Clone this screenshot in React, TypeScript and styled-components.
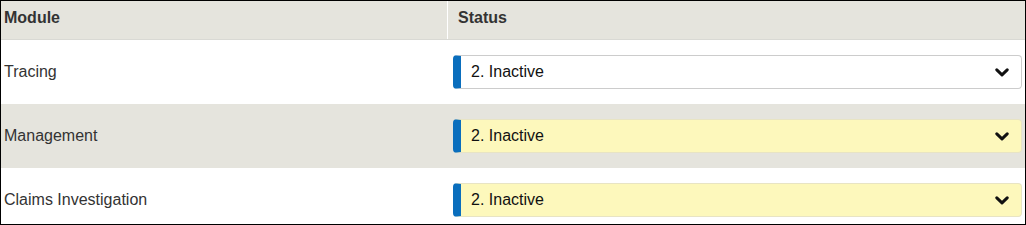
import React, { useState } from 'react';
import styled, { createGlobalStyle } from 'styled-components';

const GlobalStyle = createGlobalStyle`
  html, body {
    margin: 0;
    padding: 0;
    background: #ffffff;
  }
  body {
    font-family: "Liberation Sans", Arial, sans-serif;
  }
`;

const headerBg = '#e5e4dd';
const blue = '#0a6ebd';

const Frame = styled.div`
  width: 1026px;
  height: 225px;
  box-sizing: border-box;
  border: 1px solid #000000;
  overflow: hidden;
  background: #ffffff;
`;

const HeaderRow = styled.div`
  display: grid;
  grid-template-columns: 446px 1fr;
  height: 39px;
  background: ${headerBg};
  border-bottom: 1px solid #d9d9d4;
  box-sizing: border-box;
`;

const HeaderCell = styled.div<{ $divider?: boolean }>`
  display: flex;
  align-items: center;
  padding: 0 0 4px ${(p) => (p.$divider ? '10px' : '3px')};
  border-left: ${(p) => (p.$divider ? '1px solid #ffffff' : 'none')};
  font-size: 16px;
  font-weight: bold;
  color: #333333;
`;

const Row = styled.div<{ $shaded?: boolean }>`
  display: grid;
  grid-template-columns: 446px 1fr;
  height: 64px;
  background: ${(p) => (p.$shaded ? headerBg : '#ffffff')};
`;

const ModuleCell = styled.div`
  display: flex;
  align-items: center;
  padding: 0 0 1px 3px;
  font-size: 16px;
  color: #333333;
`;

const StatusCell = styled.div`
  display: flex;
  align-items: center;
  padding: 0 3px 0 6px;
`;

const SelectBox = styled.div<{ $highlight?: boolean }>`
  flex: 1;
  height: 34px;
  box-sizing: border-box;
  display: flex;
  align-items: center;
  justify-content: space-between;
  padding: 0 12px 0 10px;
  border: 1px solid ${(p) => (p.$highlight ? '#e8e4c4' : '#cccccc')};
  border-left: 8px solid ${blue};
  border-radius: 4px;
  background: ${(p) => (p.$highlight ? '#fdf8bc' : '#ffffff')};
  cursor: pointer;
`;

const SelectText = styled.span`
  font-size: 16px;
  color: #111111;
`;

const Chevron = () => (
  <svg width="14" height="9" viewBox="0 0 14 9" aria-hidden="true">
    <polyline
      points="1.8,1.8 7,6.8 12.2,1.8"
      fill="none"
      stroke="#111111"
      strokeWidth="3"
      strokeLinecap="round"
      strokeLinejoin="round"
    />
  </svg>
);

type ModuleRow = {
  name: string;
  status: string;
  changed: boolean;
};

const rows: ModuleRow[] = [
  { name: 'Tracing', status: '2. Inactive', changed: false },
  { name: 'Management', status: '2. Inactive', changed: true },
  { name: 'Claims Investigation', status: '2. Inactive', changed: true },
];

const App = () => {
  const [data] = useState(rows);

  return (
    <>
      <GlobalStyle />
      <Frame>
        <HeaderRow>
          <HeaderCell>Module</HeaderCell>
          <HeaderCell $divider>Status</HeaderCell>
        </HeaderRow>
        {data.map((row, i) => (
          <Row key={row.name} $shaded={i % 2 === 1}>
            <ModuleCell>{row.name}</ModuleCell>
            <StatusCell>
              <SelectBox $highlight={row.changed}>
                <SelectText>{row.status}</SelectText>
                <Chevron />
              </SelectBox>
            </StatusCell>
          </Row>
        ))}
      </Frame>
    </>
  );
};

export default App;
